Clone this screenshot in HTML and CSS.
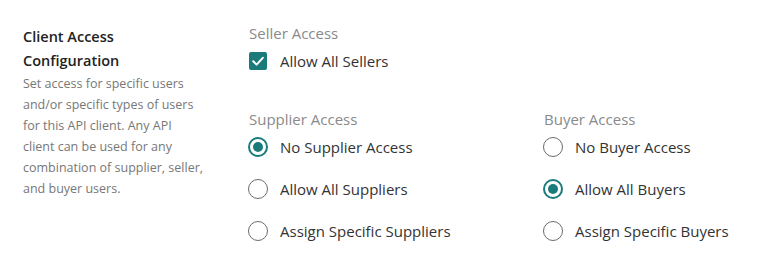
FILE: index.html
```html
<!DOCTYPE html>
<html>
<head>
<meta charset="utf-8">
<link rel="stylesheet" href="styles.css">
</head>
<body>
<div class="section">
  <div class="intro">
    <h2 class="intro-title">Client Access Configuration</h2>
    <p class="intro-text">Set access for specific users<br>and/or specific types of users<br>for this API client. Any API<br>client can be used for any<br>combination of supplier, seller,<br>and buyer users.</p>
  </div>
  <div class="fields">
    <div class="group">
      <div class="group-label">Seller Access</div>
      <label class="option">
        <span class="checkbox checked">
          <svg viewBox="0 0 18 18" width="18" height="18"><path d="M4.2 9.3 L7.6 12.6 L13.8 5.8" fill="none" stroke="#fff" stroke-width="2" stroke-linecap="round" stroke-linejoin="round"/></svg>
        </span>
        <span class="option-text">Allow All Sellers</span>
      </label>
    </div>
    <div class="columns">
      <div class="group">
        <div class="group-label">Supplier Access</div>
        <div class="options">
          <label class="option"><span class="radio checked"></span><span class="option-text">No Supplier Access</span></label>
          <label class="option"><span class="radio"></span><span class="option-text">Allow All Suppliers</span></label>
          <label class="option"><span class="radio"></span><span class="option-text">Assign Specific Suppliers</span></label>
        </div>
      </div>
      <div class="group">
        <div class="group-label">Buyer Access</div>
        <div class="options">
          <label class="option"><span class="radio"></span><span class="option-text">No Buyer Access</span></label>
          <label class="option"><span class="radio checked"></span><span class="option-text">Allow All Buyers</span></label>
          <label class="option"><span class="radio"></span><span class="option-text">Assign Specific Buyers</span></label>
        </div>
      </div>
    </div>
  </div>
</div>
</body>
</html>
```
FILE: styles.css
```css
html, body {
  margin: 0;
  padding: 0;
  background: #fff;
}
body {
  font-family: "Open Sans", "Noto Sans", sans-serif;
  color: #333;
}
.section {
  display: flex;
  padding: 23px 0 0 23px;
}
.intro {
  width: 200px;
  margin-right: 26px;
  padding-top: 2px;
}
.intro-title {
  margin: 0;
  max-width: 150px;
  font-size: 14.5px;
  font-weight: 600;
  line-height: 24px;
  color: #222;
}
.intro-text {
  margin: 0;
  font-size: 12.5px;
  line-height: 21px;
  color: #777;
  white-space: nowrap;
}
.fields {
  display: flex;
  flex-direction: column;
  gap: 34px;
}
.group-label {
  font-size: 15px;
  line-height: 20px;
  color: #8a8a8a;
  margin-bottom: 4px;
}
.columns {
  display: grid;
  grid-template-columns: 295px auto;
}
.options {
  display: flex;
  flex-direction: column;
  gap: 14px;
}
.option {
  display: flex;
  align-items: center;
  height: 28px;
  gap: 13px;
}
.option-text {
  font-size: 15px;
  color: #333;
}
.checkbox {
  width: 18px;
  height: 18px;
  border-radius: 2px;
  background: #1b7b7b;
  display: flex;
}
.radio {
  box-sizing: border-box;
  width: 20px;
  height: 20px;
  border-radius: 50%;
  border: 1.6px solid #6b6b6b;
  margin-left: -1px;
  margin-right: -1px;
  position: relative;
}
.radio.checked {
  border: 2px solid #1b7b7b;
}
.radio.checked::after {
  content: "";
  position: absolute;
  left: 3px;
  top: 3px;
  width: 10px;
  height: 10px;
  border-radius: 50%;
  background: #1b7b7b;
}
```
